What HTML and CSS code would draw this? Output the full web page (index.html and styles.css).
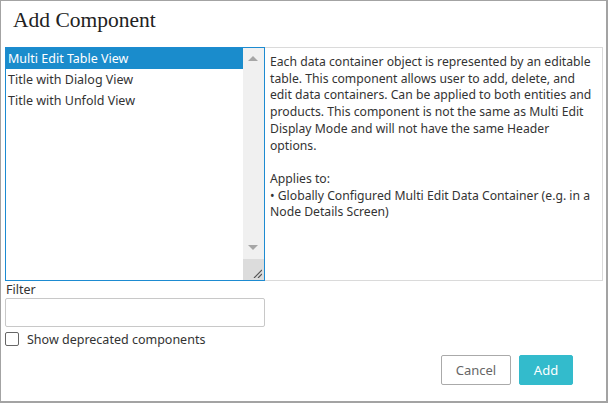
FILE: index.html
```html
<!DOCTYPE html>
<html lang="en">

<head>
    <meta charset="UTF-8">
    <title>Add Component</title>
    <link rel="stylesheet" href="styles.css">
</head>

<body>

    <div class="dialog">
        <h1 class="dialog-title">Add Component</h1>

        <div class="picker">
            <div class="listbox">
                <ul class="items">
                    <li class="selected">Multi Edit Table View</li>
                    <li>Title with Dialog View</li>
                    <li>Title with Unfold View</li>
                </ul>
                <div class="scrollbar">
                    <span class="arrow arrow-up"></span>
                    <span class="arrow arrow-down"></span>
                    <span class="grip">
                        <svg width="9" height="9" viewBox="0 0 9 9">
                            <path d="M1 9 L9 1 M5 9 L9 5" stroke="#555" stroke-width="1.2" fill="none" />
                        </svg>
                    </span>
                </div>
            </div>
            <div class="description">
                <p>Each data container object is represented by an editable table. This component allows user to add, delete, and edit data containers. Can be applied to both entities and products. This component is not the same as Multi Edit Display Mode and will not have the same Header options.</p>
                <p>Applies to:<br>• Globally Configured Multi Edit Data Container (e.g. in a Node Details Screen)</p>
            </div>
        </div>

        <!-- filter box under the list -->
        <div class="filter">
            <label for="filter">Filter</label>
            <input type="text" id="filter">
        </div>

        <label class="check">
            <span class="check-box"></span>
            Show deprecated components
        </label>

        <div class="actions">
            <button class="btn btn-cancel">Cancel</button>
            <button class="btn btn-add">Add</button>
        </div>
    </div>

</body>

</html>
```

FILE: styles.css
```css
body {
    margin: 0;
    font-family: "Noto Sans", "Open Sans", sans-serif;
    font-size: 12.5px;
    color: #333;
}

.dialog {
    width: 608px;
    height: 403px;
    box-sizing: border-box;
    border: 1px solid #a3a3a3;
    border-right-width: 2px;
    border-bottom-width: 2px;
    background: #fff;
    padding: 0 0 0 4px;
}

.dialog-title {
    margin: 0;
    padding: 7px 0 0 8px;
    height: 46px;
    box-sizing: border-box;
    font-family: "Liberation Serif", serif;
    font-weight: normal;
    font-size: 21.5px;
    color: #222;
}

.picker {
    display: flex;
    height: 234px;
    width: 598px;
}

.listbox {
    display: flex;
    width: 260px;
    box-sizing: border-box;
    border: 1px solid #1d8bd1;
}

.items {
    flex: 1;
    list-style: none;
    margin: 0;
    padding: 0;
}

.items li {
    height: 21px;
    line-height: 21px;
    padding-left: 2px;
    color: #333;
}

.items li.selected {
    background-color: #1a8ccc;
    color: #fff;
}

.scrollbar {
    position: relative;
    width: 21px;
    background: #f0f0f0;
}

.arrow {
    position: absolute;
    left: 5px;
    width: 0;
    height: 0;
    border-left: 5px solid transparent;
    border-right: 5px solid transparent;
}

.arrow-up {
    top: 8px;
    border-bottom: 5px solid #a6a6a6;
}

.arrow-down {
    bottom: 30px;
    border-top: 5px solid #a6a6a6;
}

.grip {
    position: absolute;
    left: 0;
    bottom: 0;
    width: 21px;
    height: 21px;
    background: #dcdcdc;
}

.grip svg {
    position: absolute;
    right: 2px;
    bottom: 2px;
}

.description {
    flex: 1;
    border: 1px solid #dadada;
    border-left: none;
    padding: 6px 4px 0 5px;
    font-size: 12.2px;
    line-height: 16.7px;
}

.description p {
    margin: 0 0 16.7px 0;
}

.filter {
    width: 260px;
    margin-top: 0;
}

.filter label {
    display: block;
    line-height: 17px;
    padding-left: 1px;
}

.filter input {
    display: block;
    width: 260px;
    height: 29px;
    box-sizing: border-box;
    border: 1px solid #c8c8c8;
    border-radius: 2px;
    margin: 0;
}

.check {
    display: flex;
    align-items: center;
    gap: 8px;
    margin-top: 5px;
    height: 14px;
}

.check-box {
    width: 14px;
    height: 14px;
    box-sizing: border-box;
    border: 1px solid #666;
    border-radius: 2px;
}

.actions {
    display: flex;
    justify-content: flex-end;
    gap: 8px;
    margin-top: 9px;
    padding-right: 33px;
}

.btn {
    font-family: inherit;
    font-size: 13px;
    height: 30px;
    border-radius: 2px;
    cursor: pointer;
}

.btn-cancel {
    width: 70px;
    background: #fff;
    border: 1px solid #aaa;
    color: #666;
}

.btn-add {
    width: 54px;
    background: #33bbcc;
    border: 1px solid #33bbcc;
    color: #fff;
}
```
